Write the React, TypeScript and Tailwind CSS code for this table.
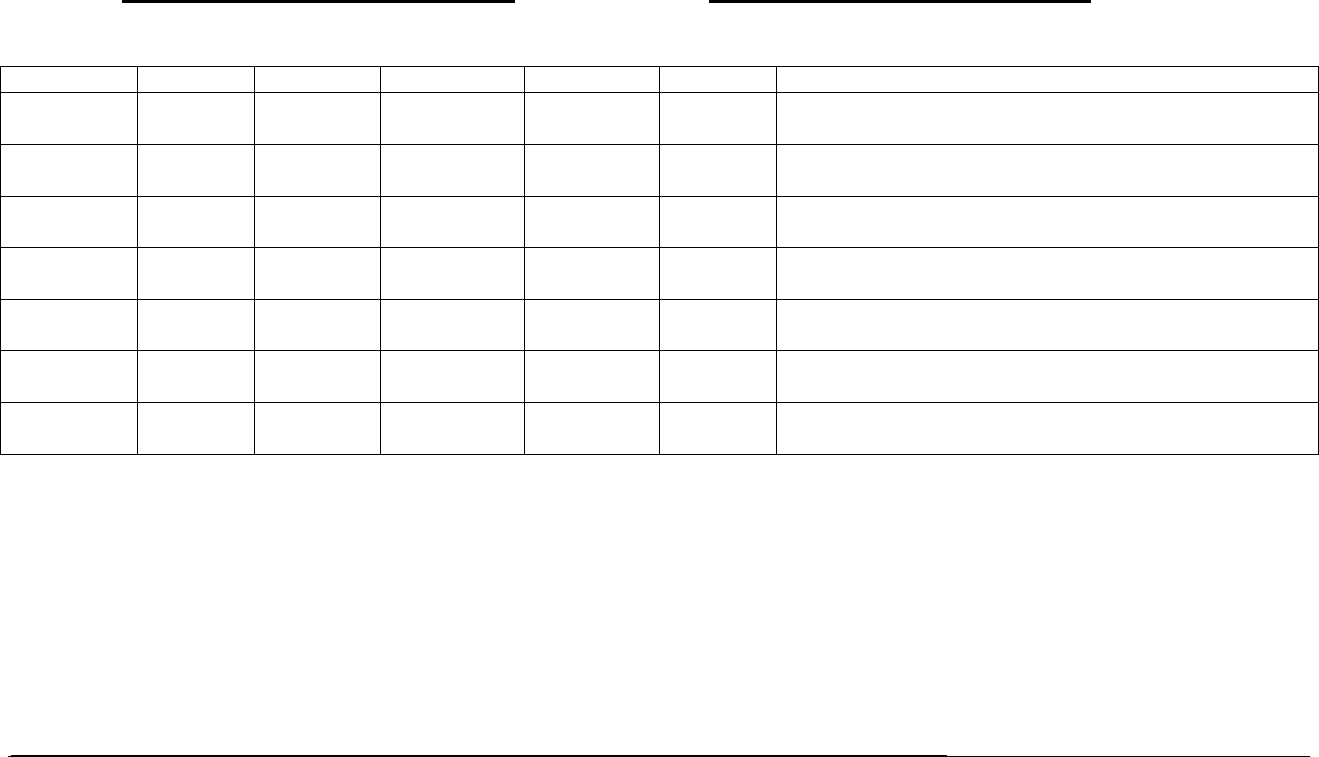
const colWidths = ["w-[137px]", "w-[117px]", "w-[126px]", "w-[144px]", "w-[135px]", "w-[117px]", "w-[542px]"];
const rowHeights = ["h-[26px]", "h-[52px]", "h-[52px]", "h-[51px]", "h-[52px]", "h-[51px]", "h-[52px]", "h-[52px]"];

function Row({ height }: { height: string }) {
  return (
    <div className={`flex ${height}`}>
      {colWidths.map((w, i) => (
        <div key={i} className={`${w} h-full shrink-0 border-r border-b border-black`} />
      ))}
    </div>
  );
}

export default function App() {
  return (
    <div className="w-[1319px] h-[757px] bg-white overflow-hidden flex flex-col font-['Liberation_Sans',sans-serif]">
      <div className="flex h-[3px] shrink-0">
        <div className="ml-[122px] w-[393px] h-full bg-black" />
        <div className="ml-[194px] w-[382px] h-full bg-black" />
      </div>

      <div className="mt-[63px] w-[1319px] border-l border-t border-black flex flex-col shrink-0">
        {rowHeights.map((h, i) => (
          <Row key={i} height={h} />
        ))}
      </div>

      <div className="mt-[300px] flex items-end h-[2px] shrink-0">
        <div className="ml-[8px] w-[3px] h-px bg-black" />
        <div className="w-[936px] h-[2px] bg-black" />
        <div className="w-[363px] h-px bg-black" />
      </div>
    </div>
  );
}
